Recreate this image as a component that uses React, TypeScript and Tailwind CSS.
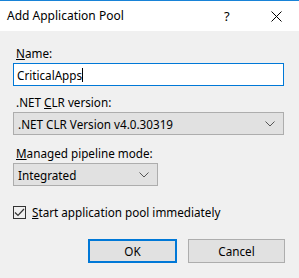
import React from 'react';

const font = { fontFamily: '"Segoe UI", "Noto Sans", "Open Sans", sans-serif' };

function Chevron() {
  return <svg width="10" height="6" viewBox="0 0 10 6" className="shrink-0"><path d="M0.5 0.5 L5 5 L9.5 0.5" fill="none" stroke="#555" strokeWidth="1"/></svg>;
}

function Select({ value, className }: { value: string; className: string }) {
  return <div className={`h-[23px] flex items-center justify-between pl-[4px] pr-[8px] bg-[#e1e1e1] border border-[#adadad] text-black ${className}`}>
    <span>{value}</span><Chevron />
  </div>;
}

export default function App() {
  return <div className="w-[299px] h-[278px] bg-[#f0f0f0] border-t border-[#1883d7] text-[11.7px] leading-[16px] text-black" style={font}>
    <div className="h-[30px] bg-white flex items-center pl-[7px] text-[12px]">
      <span className="flex-1">Add Application Pool</span>
      <span className="w-[12px] mr-[35px] text-[13px]">?</span>
      <svg width="11" height="11" viewBox="0 0 11 11" className="mr-[17px]"><path d="M0.5 0.5 L10.5 10.5 M10.5 0.5 L0.5 10.5" stroke="#000" strokeWidth="1"/></svg>
    </div>
    <div className="px-[13px] pt-[14px] flex flex-col">
      <label className="pl-[3px]"><span className="underline">N</span>ame:</label>
      <div className="mt-[2px] w-[271px] h-[23px] bg-white border border-[#0078d7] flex items-center pl-[3px]">
        CriticalApps<span className="w-px h-[14px] bg-black"></span>
      </div>
      <label className="mt-[8px] pl-[3px]">.NET <span className="underline">C</span>LR version:</label>
      <Select value=".NET CLR Version v4.0.30319" className="mt-[2px] w-[271px]" />
      <label className="mt-[10px] pl-[3px]"><span className="underline">M</span>anaged pipeline mode:</label>
      <Select value="Integrated" className="mt-[2px] w-[145px]" />
      <div className="mt-[18px] flex items-center gap-[6px]">
        <div className="w-[13px] h-[13px] border border-[#333] bg-[#f0f0f0] flex items-center justify-center">
          <svg width="11" height="9" viewBox="0 0 11 9"><path d="M1 4.5 L4 7.5 L10 1" fill="none" stroke="#333" strokeWidth="1.2"/></svg>
        </div>
        <span><span className="underline">S</span>tart application pool immediately</span>
      </div>
      <div className="mt-[19px] flex justify-end gap-[11px] pr-[1px]">
        <button className="w-[89px] h-[24px] bg-[#e1e1e1] border-2 border-[#0078d7]">OK</button>
        <button className="w-[97px] h-[24px] bg-[#e1e1e1] border border-[#adadad]">Cancel</button>
      </div>
    </div>
  </div>;
}
